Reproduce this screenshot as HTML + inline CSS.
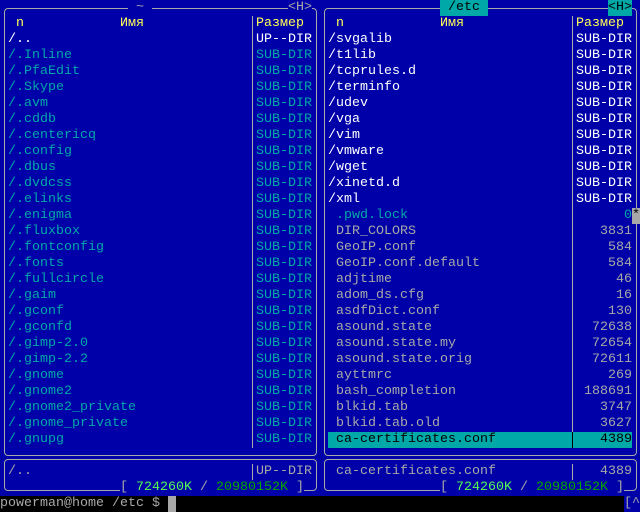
<!DOCTYPE html>
<html><head><meta charset="utf-8"><style>
html,body{margin:0;padding:0;width:640px;height:512px;overflow:hidden;background:#0000a8}
body{position:relative;font-family:"Liberation Mono","DejaVu Sans Mono",monospace;font-size:13.33px;line-height:16px}
.b{position:absolute;border:1px solid #a8a8a8;border-radius:4px;box-sizing:border-box}
.v{position:absolute;width:1px;background:#a8a8a8}
.t{position:absolute;white-space:pre;height:16px}
.c{color:#00a8a8}.w{color:#fff}.y{color:#ffff55}.g{color:#a8a8a8}
.r{text-align:right}
</style></head><body>
<div class="b" style="left:4px;top:8px;width:313px;height:448px"></div>
<div class="b" style="left:4px;top:459px;width:313px;height:32px"></div>
<div class="b" style="left:324px;top:8px;width:313px;height:448px"></div>
<div class="b" style="left:324px;top:459px;width:313px;height:32px"></div>
<div class="v" style="left:252px;top:16px;height:432px"></div>
<div class="v" style="left:252px;top:464px;height:16px"></div>
<div class="v" style="left:572px;top:16px;height:416px"></div>
<div class="v" style="left:572px;top:464px;height:16px"></div>

<div class="t g" style="left:128px;top:0;background:#0000a8"> ~ </div>
<div class="t g" style="left:288px;top:0;background:#0000a8">&lt;H&gt;</div>
<div class="t" style="left:440px;top:0;background:#00a8a8;color:#000"> /etc </div>
<div class="t" style="left:608px;top:0;background:#00a8a8;color:#000">&lt;H&gt;</div>

<div class="t y" style="left:16px;top:16px">n</div>
<div class="t y" style="left:120px;top:16px">Имя</div>
<div class="t y" style="left:256px;top:16px">Размер</div>
<div class="t y" style="left:336px;top:16px">n</div>
<div class="t y" style="left:440px;top:16px">Имя</div>
<div class="t y" style="left:576px;top:16px">Размер</div>

<div class="t w" style="left:8px;top:32px">/..</div>
<div class="t w" style="left:256px;top:32px">UP--DIR</div>
<div class="t c" style="left:8px;top:48px;line-height:16px">/.Inline
/.PfaEdit
/.Skype
/.avm
/.cddb
/.centericq
/.config
/.dbus
/.dvdcss
/.elinks
/.enigma
/.fluxbox
/.fontconfig
/.fonts
/.fullcircle
/.gaim
/.gconf
/.gconfd
/.gimp-2.0
/.gimp-2.2
/.gnome
/.gnome2
/.gnome2_private
/.gnome_private
/.gnupg</div>
<div class="t c" style="left:256px;top:48px">SUB-DIR
SUB-DIR
SUB-DIR
SUB-DIR
SUB-DIR
SUB-DIR
SUB-DIR
SUB-DIR
SUB-DIR
SUB-DIR
SUB-DIR
SUB-DIR
SUB-DIR
SUB-DIR
SUB-DIR
SUB-DIR
SUB-DIR
SUB-DIR
SUB-DIR
SUB-DIR
SUB-DIR
SUB-DIR
SUB-DIR
SUB-DIR
SUB-DIR</div>

<div class="t w" style="left:328px;top:32px">/svgalib
/t1lib
/tcprules.d
/terminfo
/udev
/vga
/vim
/vmware
/wget
/xinetd.d
/xml</div>
<div class="t w" style="left:576px;top:32px">SUB-DIR
SUB-DIR
SUB-DIR
SUB-DIR
SUB-DIR
SUB-DIR
SUB-DIR
SUB-DIR
SUB-DIR
SUB-DIR
SUB-DIR</div>
<div class="t c" style="left:336px;top:208px">.pwd.lock</div>
<div class="t c" style="left:624px;top:208px">0</div>
<div class="t" style="left:632px;top:208px;background:#a8a8a8;color:#000">*</div>
<div class="t g" style="left:336px;top:224px">DIR_COLORS
GeoIP.conf
GeoIP.conf.default
adjtime
adom_ds.cfg
asdfDict.conf
asound.state
asound.state.my
asound.state.orig
ayttmrc
bash_completion
blkid.tab
blkid.tab.old</div>
<div class="t g r" style="left:576px;width:56px;top:224px">3831
584
584
46
16
130
72638
72654
72611
269
188691
3747
3627</div>
<div class="t" style="left:328px;top:432px;width:304px;background:#00a8a8;color:#000"> ca-certificates.conf</div>
<div class="v" style="left:572px;top:432px;height:16px;background:#000"></div>
<div class="t r" style="left:576px;width:56px;top:432px;color:#000">4389</div>

<div class="t g" style="left:8px;top:464px">/..</div>
<div class="t g" style="left:256px;top:464px">UP--DIR</div>
<div class="t g" style="left:336px;top:464px">ca-certificates.conf</div>
<div class="t g r" style="left:576px;width:56px;top:464px">4389</div>

<div class="t g" style="left:120px;top:480px;background:#0000a8">[ <span style="color:#55ff55">724260K</span> / <span style="color:#00a800">20980152K</span> ]</div>
<div class="t g" style="left:440px;top:480px;background:#0000a8">[ <span style="color:#55ff55">724260K</span> / <span style="color:#00a800">20980152K</span> ]</div>

<div style="position:absolute;left:0;top:496px;width:640px;height:16px;background:#000"></div>
<div class="t g" style="left:0;top:496px">powerman@home /etc $ </div>
<div style="position:absolute;left:168px;top:496px;width:8px;height:16px;background:#a8a8a8"></div>
<div class="t g" style="left:624px;top:496px;width:16px;background:#0000a8">[^</div>
</body></html>
